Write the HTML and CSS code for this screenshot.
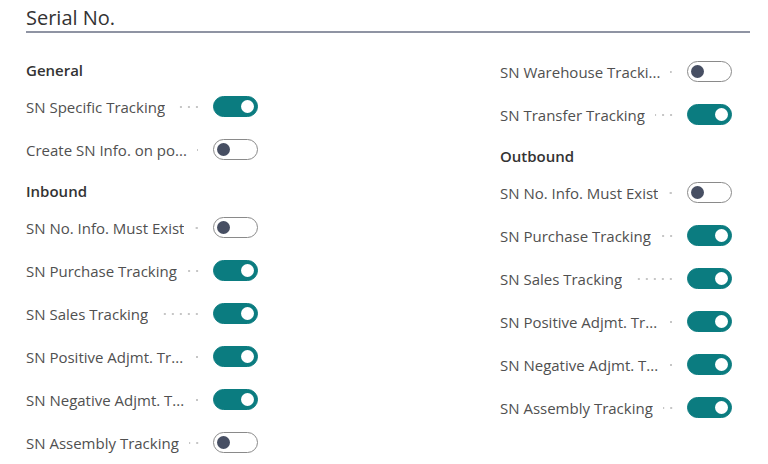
FILE: index.html
```html
<!DOCTYPE html>
<html lang="en">
<head>
  <meta charset="UTF-8" />
  <title>Serial No.</title>
  <link rel="stylesheet" href="styles.css">
</head>
<body>

  <h1 class="title">Serial No.</h1>

  <div class="fields">
    <!-- Left column -->
    <div class="column">
      <div class="group">General</div>
      <div class="row"><div class="label"><span class="caption">SN Specific Tracking</span><span class="leader"></span></div><div class="toggle on"><span class="knob"></span></div></div>
      <div class="row"><div class="label"><span class="caption" title="Create SN Info. on posting">Create SN Info. on po...</span><span class="leader"></span></div><div class="toggle"><span class="knob"></span></div></div>

      <div class="group">Inbound</div>
      <div class="row"><div class="label"><span class="caption">SN No. Info. Must Exist</span><span class="leader"></span></div><div class="toggle"><span class="knob"></span></div></div>
      <div class="row"><div class="label"><span class="caption">SN Purchase Tracking</span><span class="leader"></span></div><div class="toggle on"><span class="knob"></span></div></div>
      <div class="row"><div class="label"><span class="caption">SN Sales Tracking</span><span class="leader"></span></div><div class="toggle on"><span class="knob"></span></div></div>
      <div class="row"><div class="label"><span class="caption" title="SN Positive Adjmt. Tracking">SN Positive Adjmt. Tr...</span><span class="leader"></span></div><div class="toggle on"><span class="knob"></span></div></div>
      <div class="row"><div class="label"><span class="caption" title="SN Negative Adjmt. Tracking">SN Negative Adjmt. T...</span><span class="leader"></span></div><div class="toggle on"><span class="knob"></span></div></div>
      <div class="row"><div class="label"><span class="caption">SN Assembly Tracking</span><span class="leader"></span></div><div class="toggle"><span class="knob"></span></div></div>
    </div>

    <!-- Right column -->
    <div class="column">
      <div class="row"><div class="label"><span class="caption" title="SN Warehouse Tracking">SN Warehouse Tracki...</span><span class="leader"></span></div><div class="toggle"><span class="knob"></span></div></div>
      <div class="row"><div class="label"><span class="caption">SN Transfer Tracking</span><span class="leader"></span></div><div class="toggle on"><span class="knob"></span></div></div>

      <div class="group">Outbound</div>
      <div class="row"><div class="label"><span class="caption">SN No. Info. Must Exist</span><span class="leader"></span></div><div class="toggle"><span class="knob"></span></div></div>
      <div class="row"><div class="label"><span class="caption">SN Purchase Tracking</span><span class="leader"></span></div><div class="toggle on"><span class="knob"></span></div></div>
      <div class="row"><div class="label"><span class="caption">SN Sales Tracking</span><span class="leader"></span></div><div class="toggle on"><span class="knob"></span></div></div>
      <div class="row"><div class="label"><span class="caption" title="SN Positive Adjmt. Tracking">SN Positive Adjmt. Tr...</span><span class="leader"></span></div><div class="toggle on"><span class="knob"></span></div></div>
      <div class="row"><div class="label"><span class="caption" title="SN Negative Adjmt. Tracking">SN Negative Adjmt. T...</span><span class="leader"></span></div><div class="toggle on"><span class="knob"></span></div></div>
      <div class="row"><div class="label"><span class="caption">SN Assembly Tracking</span><span class="leader"></span></div><div class="toggle on"><span class="knob"></span></div></div>
    </div>
  </div>

</body>
</html>
```

FILE: styles.css
```css
* { box-sizing: border-box; }
body {
  font-family: 'Open Sans', 'Noto Sans', sans-serif;
  margin: 0;
  background: #fff;
  color: #505050;
}

.title {
  margin: 0 18px 0 26px;
  padding-top: 4px;
  font-size: 20px;
  line-height: 27px;
  font-weight: 400;
  color: #333;
  border-bottom: 2px solid #8f94a3;
}

.fields {
  display: grid;
  grid-template-columns: 232px 232px;
  column-gap: 242px;
  padding-left: 26px;
  margin-top: 17px;
}

.group {
  margin-top: 4px;
  height: 31px;
  display: flex;
  align-items: center;
  font-size: 15px;
  font-weight: 600;
  color: #333;
}

.row {
  height: 43px;
  display: flex;
  align-items: center;
}

.label {
  flex: 1;
  min-width: 0;
  display: flex;
  align-items: center;
  margin-right: 12px;
  font-size: 15px;
}

.caption {
  max-width: 164px;
  white-space: nowrap;
  overflow: hidden;
  text-overflow: ellipsis;
}

.leader {
  flex: 1;
  height: 4px;
  margin-left: 10px;
  background: radial-gradient(circle, #c6c6c6 1px, transparent 1.3px) right center / 8px 4px repeat-x;
}

/* Toggle switch */
.toggle {
  width: 45px;
  height: 21px;
  border-radius: 11px;
  border: 1.5px solid #8a8a8a;
  background: #fff;
  display: flex;
  align-items: center;
  padding: 0 3px;
}
.toggle .knob {
  width: 13px;
  height: 13px;
  border-radius: 50%;
  background: #474f63;
}
.toggle.on {
  background: #0b7c80;
  border-color: #0b7c80;
  justify-content: flex-end;
}
.toggle.on .knob { background: #fff; }
```
